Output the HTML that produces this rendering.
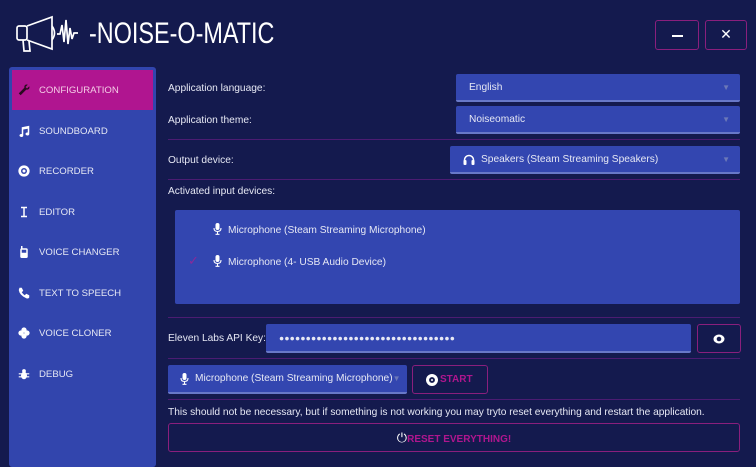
<!DOCTYPE html>
<html><head><style>
*{margin:0;padding:0;box-sizing:border-box}
body{width:756px;height:462px;background:#141a4e;font-family:"Liberation Sans","DejaVu Sans",sans-serif;font-size:10.2px;color:#e6e8f4;position:relative;overflow:hidden}
.a{position:absolute}
.side{left:9px;top:67px;width:147px;height:400px;background:#3245ad;border-radius:3px}
.item{position:absolute;left:3px;width:141px;height:40px;display:flex;align-items:center;padding-left:6px;font-size:9.6px}
.item svg{width:12px;height:12px;margin-right:9px;fill:#fff}
.act{background:#b01590;color:#f4cde6}
.dd{background:#3346b0;border-bottom:2px solid #6878c8;border-radius:2px;display:flex;align-items:center;padding-left:13px}
.arr:after{content:"▼";position:absolute;right:10px;font-size:8px;color:#6c78b8}
.sep{left:168px;width:572px;height:1px;background:#4b1c72}
.btn{border:1px solid #8a1f7d;border-radius:3px;background:#141a4e}
.lbl{left:168px}
.mic{width:9px;height:12px;margin-right:6px;vertical-align:-2px}
</style></head><body>
<svg width="0" height="0" style="position:absolute"><defs><symbol id="mic" viewBox="0 0 9 12"><rect x="2.5" y="0" width="4" height="7" rx="2" fill="#fff"/><path d="M1 5q0 3.5 3.5 3.5T8 5M4.5 8.5V11M2.5 11.3h4" stroke="#fff" stroke-width="1.1" fill="none"/></symbol></defs></svg>
<!-- logo -->
<svg class="a" style="left:14px;top:15px" width="78" height="40" viewBox="0 0 78 40" fill="none" stroke="#fff" stroke-width="1.7">
<rect x="3" y="11" width="10" height="14" rx="2"/>
<path d="M13 11 L38 2 V34 L13 25"/>
<path d="M9 25 L10 36 H16 L15 26"/>
<path d="M38 11 q5 7 0 14"/>
<path d="M43 19 h3 l2-9 2 17 2-22 2 24 2-16 2 11 2-6 h4"/>
</svg>
<div class="a" style="left:89px;top:17px;font-size:30px;font-family:'Liberation Sans',sans-serif;color:#fff;transform:scaleX(0.78);transform-origin:left;white-space:nowrap">-NOISE-O-MATIC</div>
<div class="a btn" style="left:655px;top:20px;width:44px;height:30px"><div class="a" style="left:16px;top:14px;width:11px;height:2px;background:#fff"></div></div>
<div class="a btn" style="left:705px;top:20px;width:42px;height:30px;color:#fff;font-size:14px;text-align:center;line-height:27px">✕</div>
<!-- sidebar -->
<div class="a side">
<div class="item act" style="top:3px"><svg viewBox="0 0 16 16"><path fill="#2a0a20" d="M15 3 12 6 10 4 13 1C10 0 8 2 8.5 5L1 12.5 3.5 15 11 7.5C14 8 16 6 15 3Z"/></svg>CONFIGURATION</div>
<div class="item" style="top:44px"><svg viewBox="0 0 16 16"><path d="M5 3 15 1V12A2.5 2 0 1 1 13 10V5L7 6V14A2.5 2 0 1 1 5 12Z"/></svg>SOUNDBOARD</div>
<div class="item" style="top:84px"><svg viewBox="0 0 16 16"><circle cx="8" cy="8" r="7.5"/><circle cx="8" cy="8" r="4" fill="#3245ad"/><circle cx="8" cy="8" r="2"/></svg>RECORDER</div>
<div class="item" style="top:125px"><svg viewBox="0 0 16 16"><path d="M4 1h8v2H9v10h3v2H4v-2h3V3H4Z"/></svg>EDITOR</div>
<div class="item" style="top:165px"><svg viewBox="0 0 16 16"><rect x="3" y="3" width="10" height="13" rx="2"/><rect x="5" y="5" width="6" height="4" fill="#3245ad"/><rect x="4" y="0" width="2" height="4"/></svg>VOICE CHANGER</div>
<div class="item" style="top:206px"><svg viewBox="0 0 16 16"><path d="M2 1 5 1 7 5 5 7Q7 10 9 11L11 9 15 11 15 14Q14 16 11 15 2 11 1 4Z"/></svg>TEXT TO SPEECH</div>
<div class="item" style="top:246px"><svg viewBox="0 0 16 16"><circle cx="8" cy="4" r="3.5"/><circle cx="4" cy="8" r="3.5"/><circle cx="12" cy="8" r="3.5"/><circle cx="8" cy="12" r="3.5"/></svg>VOICE CLONER</div>
<div class="item" style="top:287px"><svg viewBox="0 0 16 16"><ellipse cx="8" cy="10" rx="4" ry="5"/><circle cx="8" cy="4" r="2.5"/><path d="M1 7h14v1.5H1zM1 11h14v1.5H1z"/></svg>DEBUG</div>
</div>
<!-- content -->
<div class="a lbl" style="top:83px">Application language:</div>
<div class="a dd arr" style="left:456px;top:74px;width:284px;height:28px">English</div>
<div class="a lbl" style="top:115px">Application theme:</div>
<div class="a dd arr" style="left:456px;top:106px;width:284px;height:28px">Noiseomatic</div>
<div class="a sep" style="top:139px"></div>
<div class="a lbl" style="top:155px">Output device:</div>
<div class="a dd arr" style="left:450px;top:146px;width:290px;height:28px;padding-left:13px"><svg width="12" height="11" viewBox="0 0 12 11" style="margin-right:6px"><path d="M1.5 9V6a4.5 4.5 0 0 1 9 0v3" stroke="#fff" stroke-width="1.5" fill="none"/><rect x="0.5" y="6" width="3" height="5" rx="1" fill="#fff"/><rect x="8.5" y="6" width="3" height="5" rx="1" fill="#fff"/></svg>Speakers (Steam Streaming Speakers)</div>
<div class="a sep" style="top:179px"></div>
<div class="a lbl" style="top:186px">Activated input devices:</div>
<div class="a" style="left:175px;top:210px;width:565px;height:94px;background:#3346b0;border-radius:2px">
<div class="a" style="left:38px;top:13px"><svg class="mic"><use href="#mic"/></svg>Microphone (Steam Streaming Microphone)</div>
<div class="a" style="left:13px;top:43px;color:#8a2a9a;font-size:13px">✓</div>
<div class="a" style="left:38px;top:45px"><svg class="mic"><use href="#mic"/></svg>Microphone (4- USB Audio Device)</div>
</div>
<div class="a sep" style="top:317px"></div>
<div class="a lbl" style="top:333px">Eleven Labs API Key:</div>
<div class="a dd" style="left:266px;top:324px;width:425px;height:29px;font-size:8.5px;letter-spacing:0.2px">●●●●●●●●●●●●●●●●●●●●●●●●●●●●●●●●●</div>
<div class="a btn" style="left:697px;top:324px;width:44px;height:29px"><svg class="a" style="left:15px;top:9px" width="12" height="10" viewBox="0 0 12 10"><ellipse cx="6" cy="5" rx="5.5" ry="4.5" fill="#fff"/><circle cx="6" cy="5" r="2.3" fill="#141a4e"/></svg></div>
<div class="a sep" style="top:358px"></div>
<div class="a dd" style="left:168px;top:365px;width:239px;height:29px;padding-left:12px"><svg class="mic"><use href="#mic"/></svg>Microphone (Steam Streaming Microphone)<span style="color:#6c78b8;font-size:8px">▼</span></div>
<div class="a btn" style="left:412px;top:365px;width:76px;height:29px;display:flex;align-items:center;padding-left:13px;color:#b0168e;font-weight:bold;font-size:10px"><span style="display:inline-block;width:12px;height:12px;border-radius:50%;background:#fff;border:3px solid #fff;box-shadow:inset 0 0 0 2px #141a4e;margin-right:2px"></span>START</div>
<div class="a sep" style="top:399px"></div>
<div class="a lbl" style="top:407px">This should not be necessary, but if something is not working you may tryto reset everything and restart the application.</div>
<div class="a btn" style="left:168px;top:423px;width:572px;height:29px;text-align:center;line-height:27px;color:#b0168e;font-weight:bold;font-size:10px"><span style="color:#fff;font-size:13px;font-weight:normal">⏻</span>RESET EVERYTHING!</div>
</body></html>
